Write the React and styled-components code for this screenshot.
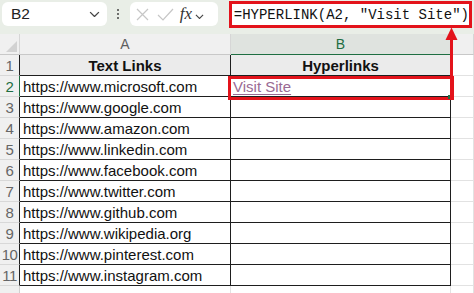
import React from "react";
import styled, { createGlobalStyle } from "styled-components";

const Global = createGlobalStyle`
  html, body { margin: 0; padding: 0; background: #fff; }
  body { font-family: "Liberation Sans", Arial, sans-serif; }
`;

const Frame = styled.div`
  position: relative;
  width: 474px;
  height: 293px;
  overflow: hidden;
  background: #fff;
`;

const Toolbar = styled.div`
  display: flex;
  align-items: flex-start;
  height: 34px;
  padding: 2px 2px 0 2px;
  box-sizing: border-box;
  background: #e9eee7;
`;

const Pill = styled.div`
  display: flex;
  align-items: center;
  height: 24px;
  width: ${(p) => p.$w}px;
  background: #fff;
  border-radius: 6px;
  box-sizing: border-box;
  padding: 0 ${(p) => p.$pad || 6}px;
`;

const NameText = styled.span`
  flex: 1;
  font-size: 15.5px;
  color: #222;
  padding-left: 2px;
`;

const Kebab = styled.div`
  width: 23px;
  height: 24px;
  display: flex;
  flex-direction: column;
  align-items: center;
  justify-content: center;
  gap: 2px;
  & > i {
    width: 2px;
    height: 2px;
    background: #444;
    border-radius: 1px;
  }
`;

const Fx = styled.span`
  font-family: "Liberation Serif", "Times New Roman", serif;
  font-style: italic;
  font-size: 17px;
  color: #333;
  margin-left: 6px;
`;

const Formula = styled.div`
  flex: 1;
  height: 27px;
  margin-top: -1px;
  margin-left: 11px;
  border: 3px solid #e3131b;
  background: #fff;
  box-sizing: border-box;
  display: flex;
  align-items: center;
  padding-left: 2px;
  font-family: "Liberation Mono", "Courier New", monospace;
  font-size: 14px;
  color: #111;
  white-space: pre;
`;

const Row = styled.div`
  display: grid;
  grid-template-columns: 20px 211px 220px 1fr;
  height: 21px;
`;

const ColHead = styled.div`
  background: ${(p) => (p.$sel ? "#dfe3df" : "#f0f0f0")};
  border-bottom: 1px solid ${(p) => (p.$sel ? "#1e6e42" : "#c8c8c8")};
  border-right: 1px solid #d6d6d6;
  color: ${(p) => (p.$sel ? "#1e6e42" : "#5e5e5e")};
  font-size: 14px;
  display: flex;
  align-items: center;
  justify-content: center;
  position: relative;
`;

const Corner = styled(ColHead)`
  &::after {
    content: "";
    position: absolute;
    right: 2px;
    bottom: 2px;
    width: 0;
    height: 0;
    border-left: 11px solid transparent;
    border-bottom: 11px solid #d2d2d2;
  }
`;

const RowHead = styled.div`
  background: #f0f0f0;
  border-bottom: 1px solid #d8d8d8;
  border-right: 1px solid ${(p) => (p.$sel ? "#1e6e42" : p.$tbl ? "#1e1e1e" : "#d0d0d0")};
  color: ${(p) => (p.$sel ? "#1e6e42" : "#666")};
  font-size: 15px;
  display: flex;
  align-items: center;
  justify-content: center;
  box-sizing: border-box;
  letter-spacing: -0.5px;
`;

const Cell = styled.div`
  border-bottom: 1px solid ${(p) => (p.$tbl ? "#1e1e1e" : "#e2e2e2")};
  border-right: 1px solid ${(p) => (p.$tbl ? "#1e1e1e" : "#e2e2e2")};
  background: ${(p) => (p.$head ? "#ebebeb" : "#fff")};
  font-size: 15px;
  font-weight: ${(p) => (p.$head ? 700 : 400)};
  color: #111;
  display: flex;
  align-items: center;
  justify-content: ${(p) => (p.$head ? "center" : "flex-start")};
  padding-left: ${(p) => (p.$head ? 0 : 3)}px;
  white-space: nowrap;
  overflow: hidden;
  box-sizing: border-box;
`;

const Link = styled.span`
  color: #9a6a94;
  text-decoration: underline;
  text-underline-offset: 2px;
  margin-left: -1px;
`;

const CellBox = styled.div`
  position: absolute;
  left: 228px;
  top: 76px;
  width: 226px;
  height: 24px;
  border: 3px solid #e3131b;
  box-sizing: border-box;
  pointer-events: none;
`;

const Handle = styled.div`
  position: absolute;
  left: 448px;
  top: 95px;
  width: 4px;
  height: 4px;
  background: #1e6e42;
`;

const Arrow = styled.svg`
  position: absolute;
  left: 440px;
  top: 26px;
`;

const urls = [
  "https://www.microsoft.com",
  "https://www.google.com",
  "https://www.amazon.com",
  "https://www.linkedin.com",
  "https://www.facebook.com",
  "https://www.twitter.com",
  "https://www.github.com",
  "https://www.wikipedia.org",
  "https://www.pinterest.com",
  "https://www.instagram.com",
];

const Chevron = ({ size = 10 }) => (
  <svg width={size} height={size * 0.6} viewBox="0 0 10 6">
    <path d="M1 1 L5 5 L9 1" fill="none" stroke="#444" strokeWidth="1.2" />
  </svg>
);

export default function App() {
  return (
    <Frame>
      <Global />
      <Toolbar>
        <Pill $w={105} $pad={7}>
          <NameText>B2</NameText>
          <Chevron size={11} />
        </Pill>
        <Kebab>
          <i />
          <i />
          <i />
        </Kebab>
        <Pill $w={88} $pad={5}>
          <svg width="15" height="15" viewBox="0 0 15 15">
            <path d="M2 2 L13 13 M13 2 L2 13" stroke="#c6c6c6" strokeWidth="1.2" fill="none" />
          </svg>
          <svg width="17" height="15" viewBox="0 0 17 15" style={{ marginLeft: 7 }}>
            <path d="M1 8 L6 13 L16 2" stroke="#c6c6c6" strokeWidth="1.2" fill="none" />
          </svg>
          <Fx>fx</Fx>
          <span style={{ marginLeft: 3 }}>
            <Chevron size={9} />
          </span>
        </Pill>
        <Formula>{'=HYPERLINK(A2, "Visit Site")'}</Formula>
      </Toolbar>

      <Row>
        <Corner />
        <ColHead>A</ColHead>
        <ColHead $sel>B</ColHead>
        <ColHead />
      </Row>
      <Row>
        <RowHead $tbl>1</RowHead>
        <Cell $tbl $head>Text Links</Cell>
        <Cell $tbl $head>Hyperlinks</Cell>
        <Cell />
      </Row>
      {urls.map((u, i) => (
        <Row key={u}>
          <RowHead $tbl $sel={i === 0}>{i + 2}</RowHead>
          <Cell $tbl>{u}</Cell>
          <Cell $tbl>{i === 0 ? <Link>Visit Site</Link> : null}</Cell>
          <Cell />
        </Row>
      ))}
      <Row>
        <RowHead />
        <Cell />
        <Cell />
        <Cell />
      </Row>

      <CellBox />
      <Handle />
      <Arrow width="24" height="75" viewBox="0 0 24 75">
        <path d="M11.5 12 L11.5 74" stroke="#e3131b" strokeWidth="3" />
        <path d="M5.5 14 L11.5 1.5 L17.5 14 Z" fill="#e3131b" />
      </Arrow>
    </Frame>
  );
}
